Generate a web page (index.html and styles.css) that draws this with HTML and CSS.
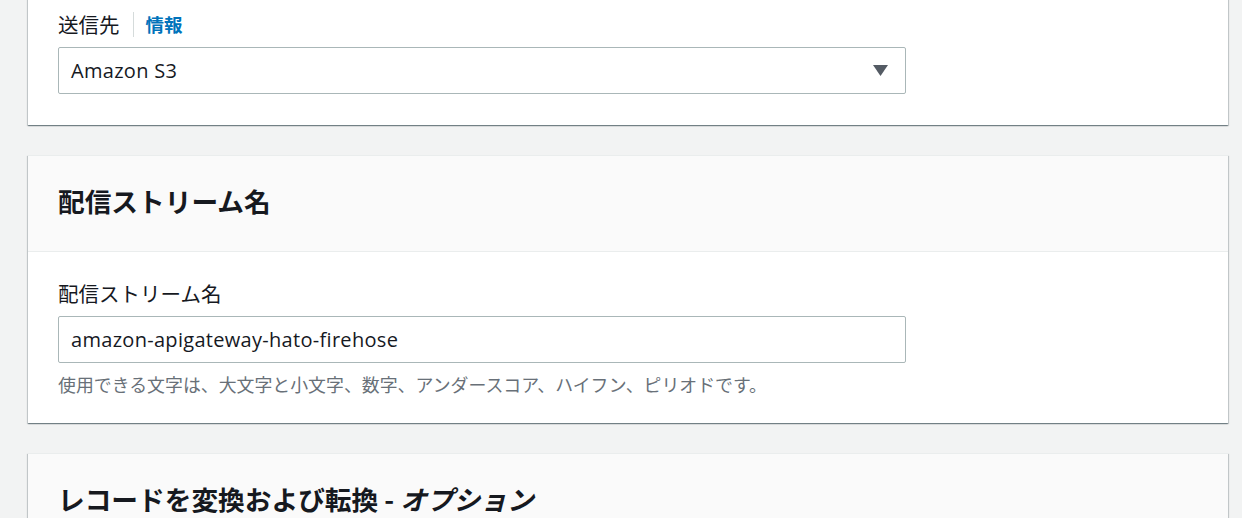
FILE: index.html
```html
<!DOCTYPE html>
<html lang="ja">
<head>
<meta charset="utf-8">
<title>Firehose 配信ストリーム</title>
<link rel="stylesheet" href="styles.css">
</head>
<body>
<main class="page">
  <section class="card card-first">
    <div class="card-body">
      <div class="field-label">
        <span>送信先</span>
        <a class="info-link">情報</a>
      </div>
      <div class="select">
        <span class="control-text">Amazon S3</span>
        <svg class="caret" width="15" height="11" viewBox="0 0 15 11" aria-hidden="true"><polygon points="0,0 15,0 7.5,11" fill="#545b64"/></svg>
      </div>
    </div>
  </section>

  <section class="card">
    <header class="card-header">
      <h2 class="card-title">配信ストリーム名</h2>
    </header>
    <div class="card-body">
      <div class="field-label">
        <span>配信ストリーム名</span>
      </div>
      <div class="text-input">
        <span class="control-text">amazon-apigateway-hato-firehose</span>
      </div>
      <p class="hint">使用できる文字は、大文字と小文字、数字、アンダースコア、ハイフン、ピリオドです。</p>
    </div>
  </section>

  <section class="card card-last">
    <header class="card-header">
      <h2 class="card-title">レコードを変換および転換 - <i>オプション</i></h2>
    </header>
    <div class="card-body"></div>
  </section>
</main>
</body>
</html>
```

FILE: styles.css
```css
html, body {
  margin: 0;
  padding: 0;
  background: #f2f3f3;
  overflow: hidden;
}

body {
  font-family: "Open Sans", "Noto Sans CJK JP", sans-serif;
  color: #16191f;
  height: 518px;
}

.page {
  padding: 0 14px 0 28px;
  display: flex;
  flex-direction: column;
  gap: 30px;
}

.card {
  width: 1200px;
  background: #ffffff;
  box-shadow: 0 1px 1px 0 rgba(0, 28, 36, 0.35),
              1px 1px 1px 0 rgba(0, 28, 36, 0.15),
              -1px 1px 1px 0 rgba(0, 28, 36, 0.15);
  border-top: 1px solid #eaeded;
  box-sizing: border-box;
}

.card-first {
  margin-top: -21px;
}

.card-first .card-body {
  padding: 30px 30px 31px;
}

.card-last {
  min-height: 200px;
}

.card-header {
  height: 95px;
  background: #fafafa;
  border-bottom: 1px solid #eaeded;
  display: flex;
  align-items: center;
  padding: 0 30px;
}

.card-title {
  margin: 0;
  font-family: "Noto Sans CJK JP", "Open Sans", sans-serif;
  font-size: 26.7px;
  font-weight: 700;
  color: #16191f;
  line-height: 1.2;
  position: relative;
  top: -2px;
}

.card-title i {
  font-style: italic;
}

.card-body {
  padding: 27px 30px 28px;
}

.field-label {
  display: flex;
  align-items: center;
  height: 28px;
  font-family: "Noto Sans CJK JP", sans-serif;
  font-size: 20.5px;
  line-height: 28px;
  color: #16191f;
}

.info-link {
  color: #0073bb;
  font-weight: 700;
  font-size: 18.5px;
  margin-left: 13px;
  padding-left: 12px;
  border-left: 1px solid #d5dbdb;
  line-height: 25px;
  cursor: pointer;
}

.select,
.text-input {
  box-sizing: border-box;
  width: 848px;
  height: 47px;
  border: 1px solid #aab7b8;
  border-radius: 2px;
  background: #ffffff;
  display: flex;
  align-items: center;
  justify-content: space-between;
  padding: 0 17px 0 12px;
}

.select {
  margin-top: 9px;
}

.text-input {
  margin-top: 9px;
}

.control-text {
  font-family: "Open Sans", "Noto Sans CJK JP", sans-serif;
  font-size: 20px;
  letter-spacing: 0.3px;
  color: #16191f;
}

.caret {
  display: block;
}

.hint {
  margin: 10px 0 0;
  font-family: "Noto Sans CJK JP", sans-serif;
  font-size: 17.9px;
  line-height: 22px;
  color: #687078;
}
```
